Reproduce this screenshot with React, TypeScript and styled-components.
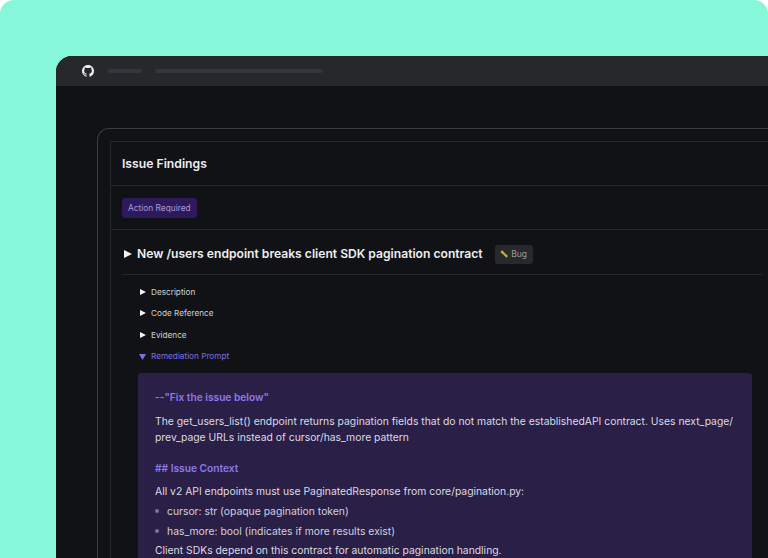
import React from "react";
import styled, { createGlobalStyle } from "styled-components";

const Global = createGlobalStyle`
  html, body { margin: 0; padding: 0; background: #ffffff; overflow: hidden; }
  * { box-sizing: border-box; }
`;

const Page = styled.div`
  width: 768px;
  height: 558px;
  overflow: hidden;
  background: #87f7da;
  border-radius: 14px 14px 0 0;
  padding: 56px 0 0 56px;
  font-family: Inter, "Liberation Sans", sans-serif;
  color: #e6e6e8;
`;

const Window = styled.div`
  width: 712px;
  height: 502px;
  background: #111215;
  border-radius: 16px 0 0 0;
  overflow: hidden;
`;

const TopBar = styled.div`
  height: 30px;
  background: #26282c;
  display: flex;
  align-items: center;
  padding-left: 26px;
`;

const Skeleton = styled.div<{ $w: number; $ml: number }>`
  width: ${(p) => p.$w}px;
  height: 4px;
  margin-left: ${(p) => p.$ml}px;
  border-radius: 2px;
  background: #33363b;
`;

const Frame = styled.div`
  margin: 42px 0 0 41px;
  width: 680px;
  height: 440px;
  border: 1px solid #3b3c40;
  border-right: 0;
  border-bottom: 0;
  border-radius: 12px 0 0 0;
  padding: 12px 0 0 12px;
`;

const Panel = styled.div`
  background: #101216;
  border: 1px solid #25272b;
  border-right: 0;
  border-bottom: 0;
  height: 430px;
`;

const HeaderRow = styled.div`
  height: 44px;
  border-bottom: 1px solid #25272b;
  display: flex;
  align-items: center;
  padding-left: 11px;
`;

const Title = styled.h2`
  margin: 0;
  font-size: 12.2px;
  line-height: 16px;
  font-weight: 600;
  color: #eeeef0;
`;

const StatusRow = styled.div`
  height: 44px;
  border-bottom: 1px solid #25272b;
  display: flex;
  align-items: center;
  padding-left: 11px;
`;

const StatusBadge = styled.span`
  height: 20px;
  padding: 0 6px;
  display: flex;
  align-items: center;
  border-radius: 3px;
  background: #2c1a5c;
  color: #a99bdc;
  font-size: 8.35px;
`;

const Body = styled.div`
  padding: 0 15px 0 11px;
`;

const IssueRow = styled.div`
  height: 45px;
  padding: 4px 0 0 2px;
  border-bottom: 1px solid #25272b;
  display: flex;
  align-items: center;
`;

const IssueTitle = styled.h3`
  margin: 0 0 0 5px;
  font-size: 12.13px;
  line-height: 16px;
  font-weight: 600;
  color: #eeeef0;
`;

const BugBadge = styled.span`
  margin-left: 12px;
  height: 19px;
  padding: 0 5.5px;
  display: flex;
  align-items: center;
  gap: 3px;
  border-radius: 3px;
  background: #28292c;
  color: #98999c;
  font-size: 8.6px;
`;

const Sections = styled.div`
  padding: 6px 0 0 16px;
`;

const Section = styled.div<{ $open?: boolean }>`
  height: 21.5px;
  padding-left: ${(p) => (p.$open ? 1 : 2)}px;
  display: flex;
  align-items: center;
  gap: 5px;
  font-size: 8.2px;
  color: ${(p) => (p.$open ? "#7f6fe0" : "#d0d0d2")};
`;

const PromptBox = styled.div`
  margin-top: 6px;
  width: 614px;
  height: 200px;
  padding: 16px 17px;
  background: #2a1f47;
  border-radius: 3px;
`;

const PromptHeading = styled.div<{ $mt?: number }>`
  margin-top: ${(p) => p.$mt ?? 0}px;
  font-size: 10.2px;
  line-height: 16px;
  font-weight: 600;
  color: #8e78ec;
`;

const PromptText = styled.p<{ $mt?: number; $lh?: number }>`
  margin: ${(p) => p.$mt ?? 0}px 0 0;
  font-size: 10.36px;
  line-height: ${(p) => p.$lh ?? 19}px;
  color: #dcdae2;
`;

const BulletList = styled.ul`
  margin: 0;
  padding: 0;
  list-style: none;
`;

const Bullet = styled.li`
  display: flex;
  align-items: center;
  height: 20px;
  font-size: 10.36px;
  color: #d2cfd9;
  &::before {
    content: "";
    width: 4px;
    height: 4px;
    margin-right: 8px;
    border-radius: 50%;
    background: #7d7690;
  }
`;

const Triangle = ({ open, color, size = 6 }: { open?: boolean; color: string; size?: number }) => (
  <svg width={size} height={size} viewBox="0 0 8 8" style={{ flex: "none" }}>
    <path d={open ? "M0 1h8L4 8z" : "M0 0l8 4-8 4z"} fill={color} />
  </svg>
);

const GitHubMark = () => (
  <svg width="12" height="12" viewBox="0 0 16 16" fill="#eeeeee">
    <path d="M8 0C3.58 0 0 3.58 0 8c0 3.54 2.29 6.53 5.47 7.59.4.07.55-.17.55-.38 0-.19-.01-.82-.01-1.49-2.01.37-2.53-.49-2.69-.94-.09-.23-.48-.94-.82-1.13-.28-.15-.68-.52-.01-.53.63-.01 1.08.58 1.23.82.72 1.21 1.87.87 2.33.66.07-.52.28-.87.51-1.07-1.78-.2-3.64-.89-3.64-3.95 0-.87.31-1.59.82-2.15-.08-.2-.36-1.02.08-2.12 0 0 .67-.21 2.2.82.64-.18 1.32-.27 2-.27s1.36.09 2 .27c1.53-1.04 2.2-.82 2.2-.82.44 1.1.16 1.92.08 2.12.51.56.82 1.27.82 2.15 0 3.07-1.87 3.75-3.65 3.95.29.25.54.73.54 1.48 0 1.07-.01 1.93-.01 2.2 0 .21.15.46.55.38A8.01 8.01 0 0 0 16 8c0-4.42-3.58-8-8-8z" />
  </svg>
);

const BugIcon = () => (
  <svg width="8" height="8" viewBox="0 0 8 8" style={{ flex: "none" }}>
    <path d="M0.5 2L2.2 0.5L8 6L6.5 7.8z" fill="#b5b52a" />
    <path d="M0.5 2L2.2 0.5L3.8 2L2.2 3.6z" fill="#e0a030" />
  </svg>
);

export default function App() {
  return (
    <>
      <Global />
      <Page>
        <Window>
          <TopBar>
            <GitHubMark />
            <Skeleton $w={34} $ml={14} />
            <Skeleton $w={168} $ml={13} />
          </TopBar>
          <Frame>
            <Panel>
              <HeaderRow>
                <Title>Issue Findings</Title>
              </HeaderRow>
              <StatusRow>
                <StatusBadge>Action Required</StatusBadge>
              </StatusRow>
              <Body>
                <IssueRow>
                  <Triangle color="#f2f2f2" size={8} />
                  <IssueTitle>New /users endpoint breaks client SDK pagination contract</IssueTitle>
                  <BugBadge>
                    <BugIcon />
                    Bug
                  </BugBadge>
                </IssueRow>
                <Sections>
                  <Section>
                    <Triangle color="#f2f2f2" />
                    Description
                  </Section>
                  <Section>
                    <Triangle color="#f2f2f2" />
                    Code Reference
                  </Section>
                  <Section>
                    <Triangle color="#f2f2f2" />
                    Evidence
                  </Section>
                  <Section $open>
                    <Triangle open color="#7f6fe0" size={7} />
                    Remediation Prompt
                  </Section>
                  <PromptBox>
                    <PromptHeading>--"Fix the issue below"</PromptHeading>
                    <PromptText $mt={8} $lh={16}>
                      The get_users_list() endpoint returns pagination fields that do not match the establishedAPI contract. Uses next_page/
                      <br />
                      prev_page URLs instead of cursor/has_more pattern
                    </PromptText>
                    <PromptHeading $mt={15}>## Issue Context</PromptHeading>
                    <PromptText $mt={6}>All v2 API endpoints must use PaginatedResponse from core/pagination.py:</PromptText>
                    <BulletList>
                      <Bullet>cursor: str (opaque pagination token)</Bullet>
                      <Bullet>has_more: bool (indicates if more results exist)</Bullet>
                    </BulletList>
                    <PromptText>Client SDKs depend on this contract for automatic pagination handling.</PromptText>
                  </PromptBox>
                </Sections>
              </Body>
            </Panel>
          </Frame>
        </Window>
      </Page>
    </>
  );
}
